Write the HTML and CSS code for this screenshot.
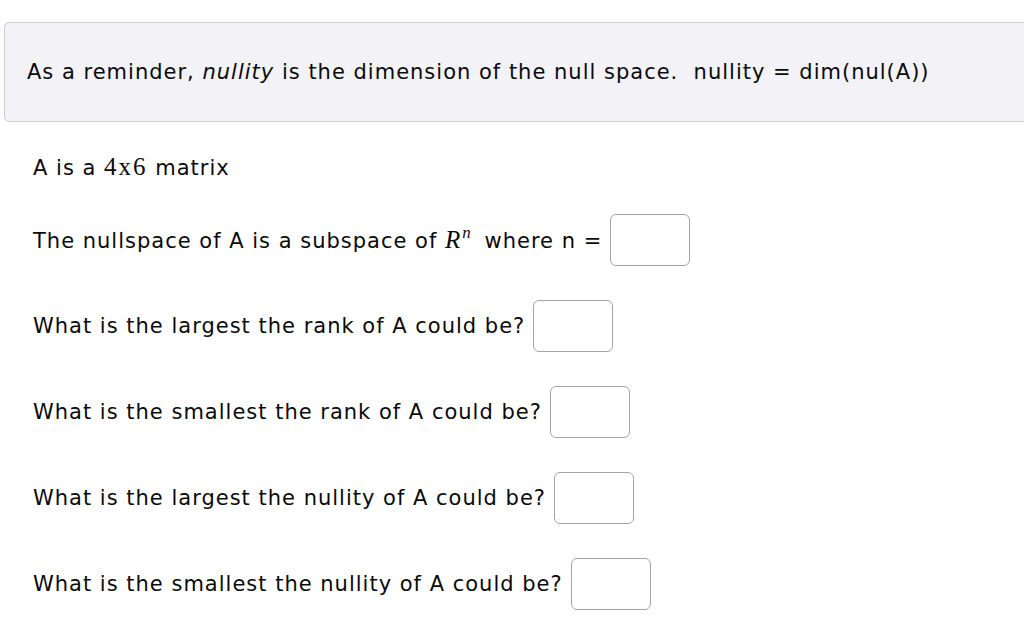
FILE: index.html
```html
<!DOCTYPE html>
<html>
<head>
<meta charset="utf-8">
<link rel="stylesheet" href="styles.css">
</head>
<body>
<div class="reminder"><span>As a reminder, <em>nullity</em> is the dimension of the null space.&nbsp; nullity = dim(nul(A))</span></div>
<div class="problem">
  <p class="intro">A is a <span class="math">4x6</span> matrix</p>
  <div class="row"><span>The nullspace of A is a subspace of <span class="math mi">R<sup>n</sup></span> where n =</span><input class="answer" type="text"></div>
  <div class="row"><span>What is the largest the rank of A could be?</span><input class="answer" type="text"></div>
  <div class="row"><span>What is the smallest the rank of A could be?</span><input class="answer" type="text"></div>
  <div class="row"><span>What is the largest the nullity of A could be?</span><input class="answer" type="text"></div>
  <div class="row"><span>What is the smallest the nullity of A could be?</span><input class="answer" type="text"></div>
</div>
</body>
</html>
```
FILE: styles.css
```css
html, body { margin: 0; padding: 0; background: #fff; }
body {
  font-family: "DejaVu Sans", "Open Sans", sans-serif;
  font-size: 21px;
  letter-spacing: 1px;
  color: #0a0a0a;
  overflow: hidden;
}
.reminder {
  margin: 22px -20px 0 4px;
  height: 100px;
  box-sizing: border-box;
  background: #f2f2f7;
  border: 1px solid #cfcfcf;
  border-radius: 5px;
  padding: 0 22px;
  display: flex;
  align-items: center;
}
.problem { padding: 0 0 0 33px; }
.intro { margin: 30px 0 0; line-height: 30px; }
.math { font-family: "Liberation Serif", "DejaVu Serif", serif; font-size: 25px; letter-spacing: 2px; }
.mi { font-style: italic; letter-spacing: 0; margin-right: 6px; }
.mi sup { font-size: 17px; vertical-align: 10px; line-height: 0; margin-left: 2px; }
.row {
  display: flex;
  align-items: center;
  height: 52px;
  margin-top: 34px;
}
.row:first-of-type { margin-top: 31px; }
.answer {
  margin-left: 8px;
  width: 80px;
  height: 52px;
  box-sizing: border-box;
  border: 1px solid #a3a3a3;
  border-radius: 6px;
  background: #fff;
  padding: 0;
}
```
